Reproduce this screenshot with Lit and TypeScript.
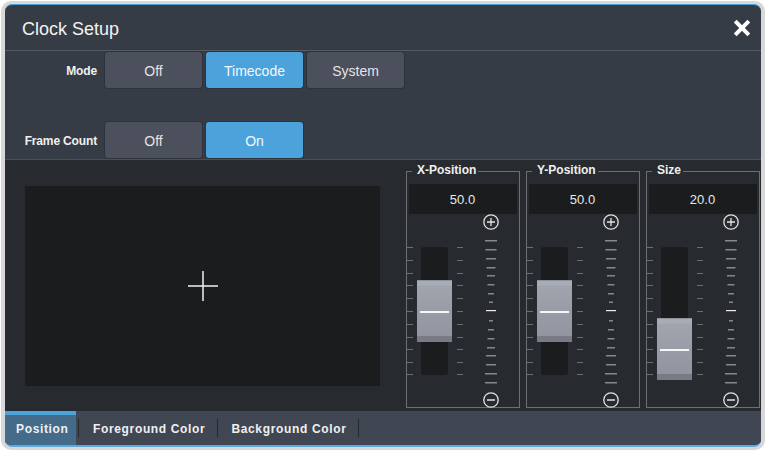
import { LitElement, html, css, svg } from "lit";
import { customElement } from "lit/decorators.js";

const leftTicks = [0, 13, 26, 38, 51, 64, 77, 90, 102, 115, 127];
const scale: [number, number][] = [
  [0, 12], [9, 11], [18, 10], [27, 9], [35, 8], [44, 7], [53, 6], [61.5, 4], [70, 10], [80, 4], [89, 6], [98, 7],
  [107, 8], [115, 10], [124, 10], [133, 12], [142, 12],
];

function plus() {
  return html`<svg class="pm" width="18" height="18" viewBox="0 0 18 18"><circle cx="9" cy="9" r="7.2" fill="none" stroke="#e4e4e4" stroke-width="1.3"/><path d="M5 9h8M9 5v8" stroke="#e4e4e4" stroke-width="1.3"/></svg>`;
}
function minus() {
  return html`<svg class="pm" width="18" height="18" viewBox="0 0 18 18"><circle cx="9" cy="9" r="7.2" fill="none" stroke="#e4e4e4" stroke-width="1.3"/><path d="M5 9h8" stroke="#e4e4e4" stroke-width="1.5"/></svg>`;
}

@customElement("app-root")
export class AppRoot extends LitElement {
  static styles = css`
    :host { display: block; width: 766px; height: 451px; background: #fff; font-family: "Liberation Sans", Arial, sans-serif; overflow: hidden; }
    .frame { box-sizing: border-box; width: 766px; height: 451px; padding: 1px; }
    .outer { box-sizing: border-box; width: 764px; height: 449px; border: solid #d8d8d8; border-width: 3px 4px; border-radius: 10px; background: #d8d8d8; }
    .panel { box-sizing: border-box; height: 100%; display: flex; flex-direction: column; background: #363c45; border-top: 1px solid #4ca3db; border-bottom: 2px solid #5aa8dc; border-radius: 7px; overflow: hidden; }
    .head { flex: none; box-sizing: border-box; height: 46px; border-bottom: 1px solid #555a63; display: flex; align-items: center; justify-content: space-between; padding: 0 10px 0 17px; color: #f2f2f2; font-size: 18px; }
    .head span { padding-top: 3px; }
    .close { display: block; }
    .rows { flex: none; height: 109px; box-sizing: border-box; padding-top: 1px; display: flex; flex-direction: column; gap: 34px; border-bottom: 1px solid #4a4f58; }
    .row { display: flex; align-items: center; gap: 4px; }
    .lab { box-sizing: border-box; width: 93px; margin-right: 3px; text-align: right; padding: 1px 1px 0 0; color: #f0f0f0; font-size: 12px; font-weight: bold; letter-spacing: -0.15px; }
    .btn { box-sizing: border-box; width: 97px; height: 36px; padding-top: 1px; border-radius: 3px; background: #4c4f5c; color: #e4e4e4; font-size: 14px; display: flex; align-items: center; justify-content: center; box-shadow: 0 0 0 1px #2e323a; }
    .btn.on { background: #4ca3db; color: #f2f8fc; }
    .main { flex: 1; min-height: 0; background: #272a2f; display: flex; padding: 11px 0 0 20px; }
    .preview { flex: none; width: 355px; height: 200px; margin-top: 15px; background: #1b1c1e; display: flex; align-items: center; justify-content: center; }
    .sliders { display: flex; gap: 6px; margin-left: 26px; }
    .group { box-sizing: border-box; position: relative; width: 114px; height: 237px; border: 1px solid #6c6f74; padding: 12px 2px 0 2px; }
    .legend { position: absolute; left: 5px; top: -9px; padding: 0 2px 0 5px; background: #272a2f; color: #f0f0f0; font-size: 12px; font-weight: bold; line-height: 14px; }
    .value { height: 30px; background: #1b1c1e; color: #e8e8e8; font-size: 13px; padding-right: 1px; display: flex; align-items: center; justify-content: center; }
    .pm { display: block; }
    .plus { display: flex; justify-content: flex-end; padding-right: 17px; margin-top: -1px; height: 18px; }
    .body { position: relative; display: flex; height: 160px; margin: 0 -2px; }
    .lt { flex: none; display: block; margin-top: 16px; }
    .track { flex: none; width: 27px; height: 128px; margin: 16px 0 0 0; border-radius: 3px; background: #1b1c1e; }
    .thumb { position: absolute; left: 10px; box-sizing: border-box; width: 35px; height: 62px; background: linear-gradient(#a8acb6 0, #a8acb6 4px, #a0a4ad 5px, #9195a0 100%); border-bottom: 6px solid #787b85; border-top: 1px solid #8d919a; }
    .thumb i { position: absolute; left: 3px; top: 30px; width: 29px; height: 2px; background: #f6f6f6; }
    .scale { flex: none; display: block; margin: 9px 0 0 0; }
    .foot { display: flex; justify-content: flex-end; padding-right: 17px; height: 18px; }
    .tabs { flex: none; height: 34px; background: #414653; display: flex; color: #f0f0f0; font-size: 12px; font-weight: bold; letter-spacing: 0.65px; }
    .tab { position: relative; display: flex; align-items: center; padding: 2px 13px 0 13px; }
    .tab::after { content: ""; position: absolute; right: 0; top: 8px; height: 18px; width: 1px; background: #262a30; }
    .tab.on { background: #456b8b; box-shadow: inset 0 4px 0 #4ca3db; padding-left: 11px; width: 71px; margin-right: 4px; box-sizing: border-box; }
    .tab.on::after { right: -3px; }
  `;

  slider(label: string, value: string, thumbTop: number) {
    return html`<div class="group">
      <div class="legend">${label}</div>
      <div class="value">${value}</div>
      <div class="plus">${plus()}</div>
      <div class="body">
        <svg class="lt" width="14" height="128" viewBox="0 0 14 128">
          ${leftTicks.map((y) => svg`<rect x="0" y="${y}" width="6" height="1" fill="#6c6f74"/>`)}
        </svg>
        <div class="track"></div>
        <div class="thumb" style="top:${thumbTop}px"><i></i></div>
        <svg class="lt" width="6" height="128" viewBox="0 0 6 128" style="margin-left:9px">
          ${leftTicks.map((y) => svg`<rect x="0" y="${y}" width="6" height="1" fill="#6c6f74"/>`)}
        </svg>
        <svg class="scale" style="margin-left:21px" width="14" height="146" viewBox="0 0 14 146">
          ${scale.map(([y, w]) => svg`<rect x="${7 - w / 2}" y="${y}" width="${w}" height="${y === 70 ? 1.2 : 1.5}" fill="${y === 70 ? "#efefef" : "#85888d"}"/>`)}
        </svg>
      </div>
      <div class="foot">${minus()}</div>
    </div>`;
  }

  render() {
    return html`<div class="frame"><div class="outer"><div class="panel">
      <div class="head"><span>Clock Setup</span>
        <svg class="close" width="18" height="18" viewBox="0 0 18 18"><path d="M2.2 2.2l13.6 13.6M15.800 2.200L2.200 15.800" stroke="#fff" stroke-width="4"/></svg>
      </div>
      <div class="rows">
        <div class="row"><div class="lab">Mode</div><div class="btn">Off</div><div class="btn on">Timecode</div><div class="btn">System</div></div>
        <div class="row"><div class="lab">Frame Count</div><div class="btn">Off</div><div class="btn on">On</div></div>
      </div>
      <div class="main">
        <div class="preview"><svg width="30" height="30" viewBox="0 0 30 30"><path d="M0 15h30M15 0v30" stroke="#f2f2f2" stroke-width="1.5"/></svg></div>
        <div class="sliders">
          ${this.slider("X-Position", "50.0", 49)}
          ${this.slider("Y-Position", "50.0", 49)}
          ${this.slider("Size", "20.0", 87)}
        </div>
      </div>
      <div class="tabs">
        <div class="tab on">Position</div>
        <div class="tab">Foreground Color</div>
        <div class="tab">Background Color</div>
      </div>
    </div></div></div>`;
  }
}
